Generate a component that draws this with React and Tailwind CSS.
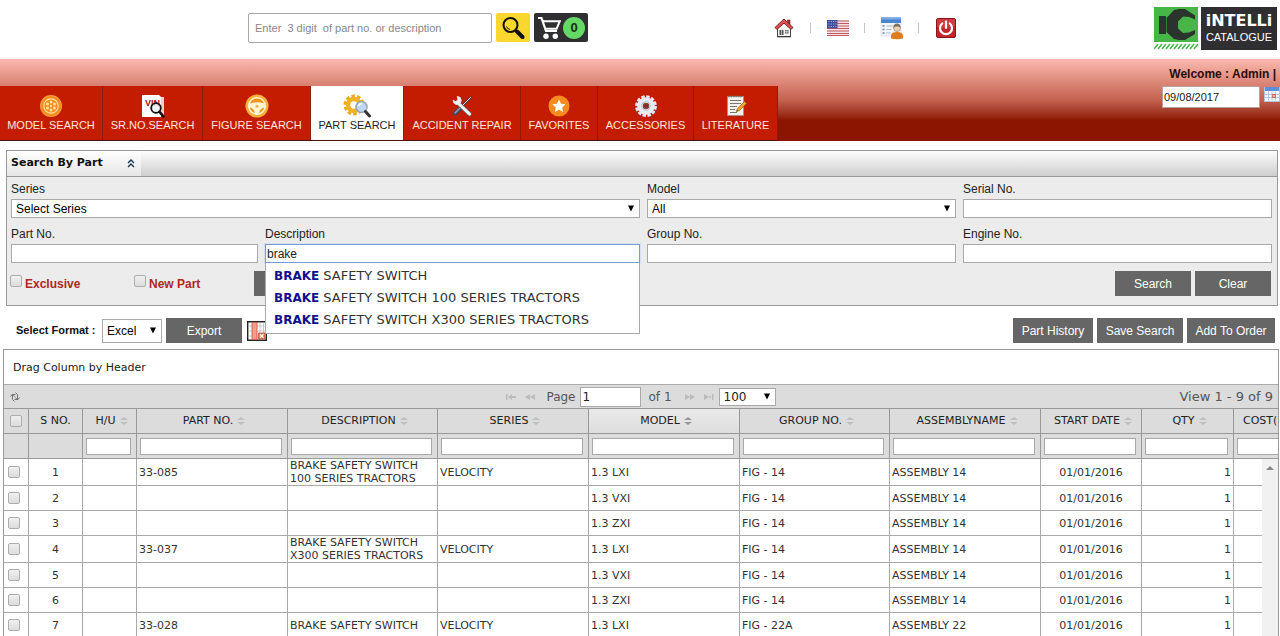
import React, { useState } from 'react';

const sans = "font-['Liberation_Sans',Arial,sans-serif]";
const verdana = "font-['DejaVu_Sans',Verdana,sans-serif]";

/* ---------- icons ---------- */

function SearchIcon() {
  return (
    <svg viewBox="0 0 24 24" className="w-6 h-6">
      <circle cx="9.5" cy="9" r="7" fill="none" stroke="#111" strokeWidth="2" />
      <path d="M5.5 10.5a4.5 4.5 0 0 0 3.5 3" fill="none" stroke="#111" strokeWidth="1" />
      <path d="M14.5 14l2 2" stroke="#111" strokeWidth="2" />
      <path d="M16 15.5l5.5 5.5" stroke="#111" strokeWidth="4" strokeLinecap="round" />
    </svg>
  );
}

function CartIcon() {
  return (
    <svg viewBox="0 0 24 24" className="w-6 h-6 shrink-0" fill="none" stroke="#fff">
      <path d="M1 2h3.5l4.5 13h11" strokeWidth="2.2" />
      <path d="M5.8 5.2h17l-3.2 7.6H8.2" strokeWidth="2" />
      <circle cx="9" cy="20.2" r="2.7" fill="#fff" stroke="none" />
      <circle cx="18.3" cy="20.2" r="2.7" fill="#fff" stroke="none" />
    </svg>
  );
}

function HomeIcon() {
  return (
    <svg viewBox="0 0 20 20" className="w-5 h-5">
      <path d="M3.5 10v8.5h13V10L10 4z" fill="#f6f4f0" stroke="#444" strokeWidth="1" />
      <path d="M13.5 2h2.5v5l-2.5-2z" fill="#a33" stroke="#522" strokeWidth=".6" />
      <path d="M10 1L1 9.5l2 2L10 5l7 6.500 2-2z" fill="#e0525a" stroke="#7a1c22" strokeWidth="1" />
      <path d="M5.500 12h4v5h-4z" fill="#555" />
      <path d="M7.500 12v5" stroke="#ddd" strokeWidth=".7" />
      <path d="M11 12h3.500v3.500H11z" fill="#666" />
      <path d="M12.700 12v3.500M11 13.700h3.500" stroke="#eee" strokeWidth=".6" />
      <path d="M3 18.800h14" stroke="#333" strokeWidth="1" />
    </svg>
  );
}

function FlagIcon() {
  return (
    <svg viewBox="0 0 22 16" className="w-[22px] h-4">
      <path d="M0 0h22v16H0z" fill="#f3e4e6" />
      <path d="M0 1h22M0 3.500h22M0 6h22M0 8.500h22M0 11h22M0 13.500h22M0 15.700h22" stroke="#c4545f" strokeWidth="1.200" />
      <path d="M0 0h10.500v8.200H0z" fill="#3d4f9e" />
      <path d="M1.500 1.500h8M1.500 4h8M1.500 6.500h8" stroke="#d5dbf2" strokeWidth=".8" strokeDasharray="1 1.300" />
    </svg>
  );
}

function ProfileIcon() {
  return (
    <svg viewBox="0 0 24 24" className="w-6 h-6">
      <path d="M1 2h20v18H1z" fill="#f2f6fb" stroke="#cdd8e6" strokeWidth=".6" />
      <path d="M1 1.500h20v5.500H1z" fill="#4a86cc" />
      <path d="M1 1.500h20v2H1z" fill="#78a9e0" />
      <path d="M2.500 10h2M2.500 13.500h2M2.500 17h2" stroke="#6d87a8" strokeWidth="1.400" />
      <path d="M6.500 10h7M6.500 13.500h5M6.500 17h4" stroke="#aab6c6" strokeWidth="1" />
      <path d="M11 22.500v-2.500q0-4 6-4t6 4v2.500q-6 1.500-12 0z" fill="#dd7d1c" />
      <circle cx="17" cy="12" r="3.500" fill="#f2cfa6" stroke="#806040" strokeWidth=".5" />
      <path d="M13.500 11.500q0-4 3.500-4t3.500 4q-3.500-2-7 0z" fill="#7b7368" />
    </svg>
  );
}

function PowerIcon() {
  return (
    <svg viewBox="0 0 20 20" className="w-5 h-5">
      <rect x=".5" y=".5" width="19" height="19" rx="1.500" fill="#c1272d" stroke="#8e1419" />
      <path d="M1 1h18v7q-9 4-18 1z" fill="#d84a50" opacity=".6" />
      <path d="M6.200 5.500a6 6 0 1 0 7.600 0" fill="none" stroke="#fff" strokeWidth="2.200" strokeLinecap="round" />
      <path d="M10 3.500v6.500" stroke="#fff" strokeWidth="2.200" strokeLinecap="round" />
    </svg>
  );
}

function WheelIcon() {
  return (
    <svg viewBox="0 0 24 24" className="w-6 h-6">
      <circle cx="12" cy="12" r="11" fill="#f9a03a" />
      <circle cx="12" cy="12" r="10" fill="#f68b1f" />
      <circle cx="12" cy="12" r="7.200" fill="none" stroke="#ffe3a0" strokeWidth="1.200" />
      <g fill="#ffe09a">
        <circle cx="12" cy="8" r="1.500" />
        <circle cx="15.500" cy="10" r="1.500" />
        <circle cx="15.500" cy="14" r="1.500" />
        <circle cx="12" cy="16" r="1.500" />
        <circle cx="8.500" cy="14" r="1.500" />
        <circle cx="8.500" cy="10" r="1.500" />
      </g>
      <circle cx="12" cy="12" r="1.200" fill="#ffe09a" />
    </svg>
  );
}

function VinIcon() {
  return (
    <svg viewBox="0 0 24 24" className="w-6 h-6">
      <path d="M5 3h18v18H5z" fill="#f4cfc8" />
      <path d="M1 1h17l2 2v20H1z" fill="#fff" />
      <text x="4" y="12" fontSize="9" fontWeight="bold" fill="#a11" fontFamily="Liberation Sans, sans-serif">VIN</text>
      <circle cx="15" cy="14" r="4.800" fill="#e8eef3" fillOpacity=".7" stroke="#111" strokeWidth="1.800" />
      <path d="M18.500 17.800l4 4.700" stroke="#111" strokeWidth="2.600" strokeLinecap="round" />
    </svg>
  );
}

function SteeringIcon() {
  return (
    <svg viewBox="0 0 24 24" className="w-6 h-6">
      <circle cx="12" cy="12" r="11.500" fill="#fbb03b" />
      <circle cx="12" cy="12" r="9" fill="#fff6d5" />
      <path d="M5 9.500a7.400 7.400 0 0 1 14 0q-7-2.500-14 0z" fill="#f6961e" />
      <path d="M4.800 13.500q4 .5 5.200 5.500a7.300 7.300 0 0 1-5.200-5.500zM19.200 13.500q-4 .5-5.200 5.500a7.300 7.300 0 0 0 5.200-5.500z" fill="#f6961e" />
      <circle cx="12" cy="12.200" r="1.500" fill="#f6b04a" />
    </svg>
  );
}

function GearSearchIcon() {
  return (
    <svg viewBox="0 0 28 24" className="w-7 h-6">
      <circle cx="11" cy="11" r="8.800" fill="none" stroke="#eaa91a" strokeWidth="3.400" strokeDasharray="3.400 2.130" />
      <circle cx="11" cy="11" r="6" fill="none" stroke="#f0b323" strokeWidth="4.500" />
      <circle cx="18.500" cy="13" r="5.500" fill="#bcd9f2" stroke="#9aa3ab" strokeWidth="1.500" />
      <path d="M15.500 12a3.500 3.500 0 0 1 3.500-2.500" stroke="#fff" strokeWidth="1.400" fill="none" />
      <path d="M22.500 17.500l4 4.500" stroke="#333" strokeWidth="3" strokeLinecap="round" />
    </svg>
  );
}

function ToolsIcon() {
  return (
    <svg viewBox="0 0 24 24" className="w-6 h-6" strokeLinecap="round" fill="none">
      <path d="M20.500 3.500L10 14" stroke="#39424f" strokeWidth="2" />
      <path d="M20.500 3.500L13 11" stroke="#d8dde2" strokeWidth="1" />
      <path d="M10.500 14L5 19.500" stroke="#3f4c60" strokeWidth="4.400" />
      <path d="M9.500 14.500L5 19" stroke="#97a3b5" strokeWidth="1.400" />
      <path d="M8 9l11.500 11" stroke="#68707a" strokeWidth="4.400" />
      <path d="M8 9l11.500 11" stroke="#f1f3f5" strokeWidth="3" />
      <path d="M3.200 6.500a4 4 0 1 0 4-4l.8 3-2 2z" fill="#f1f3f5" stroke="#dfe3e6" strokeWidth="1" />
    </svg>
  );
}

function StarIcon() {
  return (
    <svg viewBox="0 0 24 24" className="w-6 h-6">
      <circle cx="12" cy="12" r="10.500" fill="#f68b1f" />
      <path d="M12 5.500l2 4.200 4.600.6-3.400 3.200.9 4.600L12 15.800l-4.100 2.300.9-4.600-3.400-3.200 4.600-.6z" fill="#fff" />
    </svg>
  );
}

function GearIcon() {
  return (
    <svg viewBox="0 0 24 24" className="w-6 h-6">
      <circle cx="12" cy="12.500" r="9.300" fill="none" stroke="#8f9aab" strokeWidth="3" strokeDasharray="3.200 1.670" />
      <circle cx="12" cy="12" r="9.300" fill="none" stroke="#e7ebf1" strokeWidth="3" strokeDasharray="3.200 1.670" />
      <circle cx="12" cy="12" r="6" fill="none" stroke="#e7ebf1" strokeWidth="5.500" />
      <circle cx="12" cy="12" r="4.300" fill="none" stroke="#b9c2d0" strokeWidth="1" />
      <circle cx="12" cy="12" r="2.600" fill="#8c2a1c" stroke="#5e6672" strokeWidth=".8" />
    </svg>
  );
}

function NoteIcon() {
  return (
    <svg viewBox="0 0 24 24" className="w-6 h-6">
      <path d="M3.500 2.500h16v19h-16z" fill="#f4f2ea" stroke="#9d968a" strokeWidth="1" />
      <path d="M4 2.500h15" stroke="#777" strokeWidth="1.500" strokeDasharray="1.500 1" />
      <path d="M6 6.500h11M6 9.500h11M6 12.500h7M6 15.500h5M6 18.500h7" stroke="#777" strokeWidth="1.200" />
      <path d="M12.500 17.500l1-3 7-7 2 2-7 7z" fill="#f5a623" stroke="#8a5a12" strokeWidth=".7" />
      <path d="M12.500 17.500l.5-1.500 1 1z" fill="#333" />
    </svg>
  );
}

function CalendarIcon() {
  return (
    <svg viewBox="0 0 16 16" className="w-4 h-4 shrink-0">
      <path d="M.5 1.500h15v14H.5z" fill="#f4f7fc" stroke="#b4c4e0" />
      <path d="M1 1h14v4H1z" fill="#5f8fd6" />
      <path d="M4.500 5.500v9M8 5.500v9M11.500 5.500v9M1 8.500h14M1 11.500h14" stroke="#b7c6e0" strokeWidth="1" />
      <path d="M8.500 8.500h3v3h-3z" fill="#f3b6a4" stroke="#d2573a" strokeWidth=".8" />
    </svg>
  );
}

function ColumnsIcon() {
  return (
    <svg viewBox="0 0 20 20" className="w-5 h-5">
      <path d="M.7.700h18.600v18.600H.7z" fill="#fff" stroke="#222" strokeWidth="1.400" />
      <path d="M1.500 5h17M1.500 10h17M1.500 15h17M13 1.500v17M16.500 1.500v17" stroke="#b9bcc4" strokeWidth=".8" />
      <path d="M5 1.400h5v17.200H5z" fill="#f0a08c" stroke="#c9523b" strokeWidth=".8" />
      <path d="M11.500 12h6.500v6h-6.500z" fill="#e8734d" stroke="#b84a2a" strokeWidth=".7" />
      <path d="M13 13.300l3.500 3.400M16.500 13.300l-3.500 3.400" stroke="#fff" strokeWidth="1.300" />
    </svg>
  );
}

function SortIcon({ active }) {
  return (
    <svg viewBox="0 0 8 10" className="w-2 h-[10px] shrink-0" fill={active ? '#999' : '#bfbfbf'}>
      <path d="M4 1l4 3H0zM4 9l4-3H0z" />
    </svg>
  );
}

function Logo() {
  return (
    <a href="#home" aria-label="Intelli Catalogue" className="flex gap-[3px]">
      <svg viewBox="0 0 44 43" className="w-11 h-[43px]">
        <path d="M0 0h44v35H0z" fill="#47b649" />
        <path d="M5 9h7v18H5z" fill="#2b332d" />
        <path d="M12.500 11l7.500-8 5-1h6l10 6.500v4L35 10l-6-.5-5 5v7l5 4.500 6-.5 6-2.500v4L31 33h-6l-5-1-7.500-7z" fill="#2b332d" />
        <path d="M0 42l4-5M4 42l4-5M8 42l4-5M12 42l4-5M16 42l4-5M20 42l4-5M24 42l4-5M28 42l4-5M32 42l4-5M36 42l4-5M40 42l4-5" stroke="#47b649" strokeWidth="1.500" />
      </svg>
      <span className="flex flex-col items-center justify-center w-[76px] h-[43px] bg-[#2f2f31] text-white">
        <span className="font-['DejaVu_Sans',sans-serif] font-bold text-[16px] leading-[18px]">iNTELLi</span>
        <span className="text-[11px] leading-[15px]">CATALOGUE</span>
      </span>
    </a>
  );
}

/* ---------- form pieces ---------- */

function GreyButton({ className, children, ...rest }) {
  return (
    <button type="button" className={`h-[25px] bg-[#666] text-white text-[12px] ${className}`} {...rest}>
      {children}
    </button>
  );
}

function Select({ id, options, className, ...rest }) {
  return (
    <span className={`relative block ${className}`}>
      <select id={id} className="appearance-none block w-full h-full pl-1 border border-[#a9a9a9] bg-white text-[12px] leading-4" {...rest}>
        {options.map((o) => (
          <option key={o}>{o}</option>
        ))}
      </select>
      <svg viewBox="0 0 6 6" className="absolute right-[6px] top-1/2 -mt-1 w-[6px] h-[7px] pointer-events-none">
        <path d="M0 0h6L3 6z" fill="#000" />
      </svg>
    </span>
  );
}

function Field({ id, label, className = '', children }) {
  return (
    <div className={`flex flex-col ${className}`}>
      <label htmlFor={id} className="h-[22px] leading-6 text-[12px] text-[#222]">
        {label}
      </label>
      {children || <input id={id} type="text" className="w-full h-[19px] border border-[#a9a9a9] bg-white text-[12px]" />}
    </div>
  );
}

function CheckBox(props) {
  return (
    <input
      type="checkbox"
      className="appearance-none block w-3 h-3 shrink-0 border border-[#adadad] rounded-[2px] bg-linear-to-b from-[#f0f0f0] to-[#dcdcdc] checked:bg-[#666]"
      {...props}
    />
  );
}

/* ---------- header ---------- */

function TopBar() {
  const links = [
    ['Home', <HomeIcon />],
    ['Language', <FlagIcon />],
    ['Profile', <ProfileIcon />],
    ['Log out', <PowerIcon />],
  ];
  return (
    <header className="flex items-start h-[59px] pl-[248px] pr-[3px]">
      <div className="flex items-start gap-1 pt-[13px]">
        <input
          type="text"
          aria-label="Search parts"
          placeholder="Enter  3 digit  of part no. or description"
          className="w-[244px] h-[30px] px-[6px] border border-[#a9a9a9] rounded-[2px] text-[11px] placeholder:text-[#888]"
        />
        <button type="button" aria-label="Search" className="flex items-center justify-center w-[34px] h-[29px] bg-[#f9d72f] rounded-[2px]">
          <SearchIcon />
        </button>
        <button type="button" aria-label="Cart" className="flex items-center gap-[2px] w-[54px] h-[29px] px-[3px] bg-[#2f2f31] rounded-[2px]">
          <CartIcon />
          <span className="w-[22px] h-[22px] shrink-0 rounded-full bg-[#65d865] text-[13px] leading-[22px] font-bold text-[#143014]">0</span>
        </button>
      </div>
      <nav className="flex items-center h-[55px] ml-[169px]">
        {links.map(([label, icon], i) => (
          <React.Fragment key={label}>
            {i > 0 && <span className="w-px h-[10px] bg-[#c4c4c4]" />}
            <a href="#link" aria-label={label} className="flex justify-center w-[53px]">
              {icon}
            </a>
          </React.Fragment>
        ))}
      </nav>
      <div className="ml-auto pt-[7px]">
        <Logo />
      </div>
    </header>
  );
}

const TABS = [
  { label: 'MODEL SEARCH', icon: <WheelIcon />, width: 'w-[103px]' },
  { label: 'SR.NO.SEARCH', icon: <VinIcon />, width: 'w-[100px]' },
  { label: 'FIGURE SEARCH', icon: <SteeringIcon />, width: 'w-[108px]' },
  { label: 'PART SEARCH', icon: <GearSearchIcon />, width: 'w-[93px]', active: true },
  { label: 'ACCIDENT REPAIR', icon: <ToolsIcon />, width: 'w-[117px]' },
  { label: 'FAVORITES', icon: <StarIcon />, width: 'w-[77px]' },
  { label: 'ACCESSORIES', icon: <GearIcon />, width: 'w-[96px]' },
  { label: 'LITERATURE', icon: <NoteIcon />, width: 'w-[84px]' },
];

function Banner() {
  return (
    <div className="flex items-end justify-between h-[82px] bg-linear-to-b from-[#fbb9b0] via-[#c4614f] via-50% to-[#8b1500] to-75%">
      <nav className="flex h-[55px] border-b border-[#4a1208]">
        {TABS.map((t) => (
          <a
            key={t.label}
            href="#tab"
            className={`flex flex-col items-center pt-2 border-r border-[#8f1a0a] text-[11px] leading-[15px] whitespace-nowrap ${t.width} ${
              t.active ? 'bg-white text-[#222]' : 'bg-[#c41c00] text-[#ffe6dc]'
            }`}
          >
            {t.icon}
            {t.label}
          </a>
        ))}
      </nav>
      <div className="flex flex-col h-full pt-[7px]">
        <p className="pr-1 text-right text-[12px] leading-4 font-bold text-[#2a0d0a]">Welcome : Admin |</p>
        <div className="flex gap-1 pt-1">
          <input
            type="text"
            aria-label="Date"
            defaultValue="09/08/2017"
            className="w-[98px] h-[22px] px-px border border-[#b9a09c] bg-white text-[11px] text-[#222]"
          />
          <button type="button" aria-label="Pick date" className="flex w-4 h-4">
            <CalendarIcon />
          </button>
        </div>
      </div>
    </div>
  );
}

/* ---------- search form ---------- */

const SUGGESTIONS = ['SAFETY SWITCH', 'SAFETY SWITCH 100 SERIES TRACTORS', 'SAFETY SWITCH X300 SERIES TRACTORS'];

function SearchPanel() {
  const [text, setText] = useState('brake');

  return (
    <section className="ml-[6px] mr-[2px] mt-[9px] border border-[#999] bg-[#ececec]">
      <div className="flex h-[26px] border-b border-[#999] bg-linear-to-b from-[#fdfdfd] to-[#cecece]">
        <div className="flex items-center gap-6 w-[134px] pl-1 bg-linear-to-b from-white to-[#e6e6e6]">
          <h2 className={`text-[11px] font-bold text-[#111] whitespace-nowrap ${verdana}`}>Search By Part</h2>
          <button type="button" aria-label="Collapse">
            <svg viewBox="0 0 8 9" className="w-2 h-[9px]" fill="none" stroke="#12324a" strokeWidth="1.300">
              <path d="M1 4l3-3 3 3M1 8l3-3 3 3" />
            </svg>
          </button>
        </div>
      </div>

      <div className="grid grid-cols-[247fr_375fr_309fr_309fr] gap-x-[7px] gap-y-1 pl-1 pr-[5px]">
        <Field id="series" label="Series" className="col-span-2">
          <Select id="series" options={['Select Series']} className="h-[19px]" />
        </Field>
        <Field id="model" label="Model">
          <Select id="model" options={['All']} className="h-[19px]" />
        </Field>
        <Field id="serial" label="Serial No." />
        <Field id="part" label="Part No." />
        <Field id="description" label="Description">
          <div className="relative">
            <input
              id="description"
              type="text"
              autoComplete="off"
              value={text}
              onChange={(e) => setText(e.target.value)}
              className="block w-full h-[19px] px-px border border-[#7b9ad0] bg-white text-[12px] text-[#222] outline outline-[#d5e0f5]"
            />
            <ul className={`absolute left-0 right-0 top-[19px] z-10 py-[2px] border border-t-0 border-[#aaa] bg-white text-[13px] text-[#333] ${verdana}`}>
              {SUGGESTIONS.map((s) => (
                <li key={s} className="h-[22px] px-2 leading-[22px] whitespace-nowrap">
                  <b className="text-[#10108c] text-[12px]">BRAKE</b> {s}
                </li>
              ))}
            </ul>
          </div>
        </Field>
        <Field id="group" label="Group No." />
        <Field id="engine" label="Engine No." />
      </div>

      <div className="flex items-start h-[42px] pt-2 pl-[3px] pr-[6px] text-[12px] font-bold text-[#b0281a]">
        <label className="flex items-end gap-[3px] w-[124px] h-[20px] leading-[14px]">
          <span className="self-center"><CheckBox /></span>
          Exclusive
        </label>
        <label className="flex items-end gap-[3px] w-[120px] h-[20px] leading-[14px]">
          <span className="self-center"><CheckBox /></span>
          New Part
        </label>
        <GreyButton className="w-[76px]" aria-label="Description options" />
        <div className="flex gap-1 ml-auto font-normal">
          <GreyButton className="w-[76px]">Search</GreyButton>
          <GreyButton className="w-[76px]">Clear</GreyButton>
        </div>
      </div>
    </section>
  );
}

function ActionBar() {
  return (
    <div className="flex items-center gap-1 h-[25px] mt-3 pl-4 pr-[5px]">
      <label htmlFor="format" className="w-[82px] text-[11px] font-bold text-[#111] whitespace-nowrap">
        Select Format :
      </label>
      <Select id="format" options={['Excel', 'PDF']} className="w-[60px] h-6" />
      <GreyButton className="w-[76px]">Export</GreyButton>
      <button type="button" aria-label="Choose columns" className="ml-px">
        <ColumnsIcon />
      </button>
      <div className="flex gap-1 ml-auto">
        <GreyButton className="w-20">Part History</GreyButton>
        <GreyButton className="w-[86px]">Save Search</GreyButton>
        <GreyButton className="w-[88px]">Add To Order</GreyButton>
      </div>
    </div>
  );
}

/* ---------- results grid ---------- */

const COLUMNS = ['H/U', 'PART NO.', 'DESCRIPTION', 'SERIES', 'MODEL', 'GROUP NO.', 'ASSEMBLYNAME', 'START DATE', 'QTY'];

const ROWS = [
  ['33-085', 'BRAKE SAFETY SWITCH 100 SERIES TRACTORS', 'VELOCITY', '1.3 LXI', 'FIG - 14', 'ASSEMBLY 14'],
  ['', '', '', '1.3 VXI', 'FIG - 14', 'ASSEMBLY 14'],
  ['', '', '', '1.3 ZXI', 'FIG - 14', 'ASSEMBLY 14'],
  ['33-037', 'BRAKE SAFETY SWITCH X300 SERIES TRACTORS', 'VELOCITY', '1.3 LXI', 'FIG - 14', 'ASSEMBLY 14'],
  ['', '', '', '1.3 VXI', 'FIG - 14', 'ASSEMBLY 14'],
  ['', '', '', '1.3 ZXI', 'FIG - 14', 'ASSEMBLY 14'],
  ['33-028', 'BRAKE SAFETY SWITCH', 'VELOCITY', '1.3 LXI', 'FIG - 22A', 'ASSEMBLY 22'],
];

function Cols() {
  return (
    <colgroup>
      <col className="w-[25px]" />
      <col className="w-[54px]" />
      <col className="w-[54px]" />
      <col className="w-[151px]" />
      <col className="w-[150px]" />
      <col className="w-[151px]" />
      <col className="w-[151px]" />
      <col className="w-[150px]" />
      <col className="w-[151px]" />
      <col className="w-[101px]" />
      <col className="w-[92px]" />
      <col className="w-[92px]" />
    </colgroup>
  );
}

function Pager() {
  return (
    <div className="grid grid-cols-[1fr_auto_1fr] items-center h-[24px] px-[5px] border-t border-[#aaa] bg-[#dcdcdc] text-[12px] text-[#555]">
      <button type="button" aria-label="Reload" className="justify-self-start">
        <svg viewBox="0 0 12 12" className="w-3 h-3" fill="none" stroke="#777" strokeWidth="1">
          <path d="M3.500 8.500v-5h3M8.500 3.500v5h-3" />
          <path d="M1.500 5.500l2-2.500 2 2.500M6.500 6.500l2 2.500 2-2.500M6.500 1.500l2 2M5.500 10.500l-2-2" />
        </svg>
      </button>
      <div className="flex items-center">
        <button type="button" aria-label="First page" disabled className="mr-[9px]">
          <svg viewBox="0 0 10 6" className="w-[10px] h-[6px]" fill="#bbb">
            <path d="M0 0h1.500v6H0zM2 3l4-3v2h4v2H6v2z" />
          </svg>
        </button>
        <button type="button" aria-label="Previous page" disabled className="mr-[7px]">
          <svg viewBox="0 0 10 6" className="w-[10px] h-[6px]" fill="#bbb">
            <path d="M0 3l5-3v6zM5 3l5-3v6z" />
          </svg>
        </button>
        <label htmlFor="page" className="ml-1 mr-1">Page</label>
        <input id="page" type="text" defaultValue="1" className="w-[61px] h-5 px-[2px] border border-[#a9a9a9] bg-white text-[12px] text-[#222]" />
        <span className="ml-2">of 1</span>
        <button type="button" aria-label="Next page" disabled className="ml-[13px] mr-[9px]">
          <svg viewBox="0 0 10 6" className="w-[10px] h-[6px]" fill="#bbb">
            <path d="M0 0l5 3-5 3zM5 0l5 3-5 3z" />
          </svg>
        </button>
        <button type="button" aria-label="Last page" disabled className="mr-[5px]">
          <svg viewBox="0 0 10 6" className="w-[10px] h-[6px]" fill="#bbb">
            <path d="M0 0l5 3-5 3zM5 2.200h2v1.600H5zM8 0h1.500v6H8z" />
          </svg>
        </button>
        <Select options={['100', '200']} aria-label="Rows per page" className="w-[57px] h-[18px] text-[#222]" />
      </div>
      <span className="justify-self-end text-[13px]">View 1 - 9 of 9</span>
    </div>
  );
}

function ResultsGrid() {
  const td = 'px-[2px] border-r border-b border-[#aaa]';
  const filter = 'block w-full h-[17px] border border-[#a9a9a9] bg-white font-normal';

  return (
    <section className={`flex flex-col flex-1 min-h-0 mt-[6px] ml-[3px] mr-px border border-b-0 border-[#999] ${verdana}`}>
      <p className="h-[34px] pl-[9px] leading-[36px] text-[11px] text-[#222]">Drag Column by Header</p>
      <Pager />
      <div className="overflow-hidden shrink-0">
        <table className="table-fixed w-[1322px] border-separate border-spacing-0 bg-[#dcdcdc] text-[11px] text-[#222]">
          <Cols />
          <thead>
            <tr className="h-[26px]">
              <th className="pl-[6px] border-t border-r border-b border-[#999]">
                <CheckBox aria-label="Select all rows" />
              </th>
              <th className="border-t border-r border-b border-[#999] font-normal">S NO.</th>
              {COLUMNS.map((c) => (
                <th
                  key={c}
                  className={`border-t border-r border-b border-[#999] font-normal whitespace-nowrap ${
                    c === 'MODEL' ? 'bg-linear-to-b from-[#e9e9e9] to-[#dedede]' : ''
                  }`}
                >
                  <span className="flex items-center justify-center gap-1 pl-1">
                    {c}
                    <SortIcon active={c === 'MODEL'} />
                  </span>
                </th>
              ))}
              <th className="pl-[9px] border-t border-r border-b border-[#999] font-normal text-left">COST(</th>
            </tr>
            <tr className="h-[25px]">
              <th className="border-r border-b border-[#999]" />
              <th className="border-r border-b border-[#999]" />
              {[...COLUMNS, 'COST'].map((c) => (
                <th key={c} className="pl-[3px] pr-[5px] border-r border-b border-[#999]">
                  <input type="text" aria-label={`Filter ${c}`} className={filter} />
                </th>
              ))}
            </tr>
          </thead>
        </table>
      </div>
      <div className="flex flex-1 min-h-0">
        <div className="flex-1 min-w-0 overflow-hidden">
          <table className="table-fixed w-[1322px] border-separate border-spacing-0 text-[11px] leading-[13px] text-[#333]">
            <Cols />
            <tbody>
              {ROWS.map(([part, description, series, model, group, assembly], i) => (
                <tr key={i} className="h-[25px]">
                  <td className="pl-1 border-r border-b border-[#aaa]">
                    <CheckBox aria-label={`Select row ${i + 1}`} />
                  </td>
                  <td className={`${td} text-center`}>{i + 1}</td>
                  <td className={td} />
                  <td className={td}>{part}</td>
                  <td className={td}>{description}</td>
                  <td className={td}>{series}</td>
                  <td className={td}>{model}</td>
                  <td className={td}>{group}</td>
                  <td className={td}>{assembly}</td>
                  <td className={`${td} text-center`}>01/01/2016</td>
                  <td className={`${td} text-right`}>1</td>
                  <td className={td} />
                </tr>
              ))}
            </tbody>
          </table>
        </div>
        <div className="flex justify-center w-4 pt-[7px] bg-[#f1f1f1]">
          <svg viewBox="0 0 8 4" className="w-2 h-1">
            <path d="M4 0l4 4H0z" fill="#888" />
          </svg>
        </div>
      </div>
    </section>
  );
}

export default function App() {
  return (
    <div className={`flex flex-col h-screen overflow-hidden bg-white ${sans}`}>
      <TopBar />
      <Banner />
      <SearchPanel />
      <ActionBar />
      <ResultsGrid />
    </div>
  );
}
